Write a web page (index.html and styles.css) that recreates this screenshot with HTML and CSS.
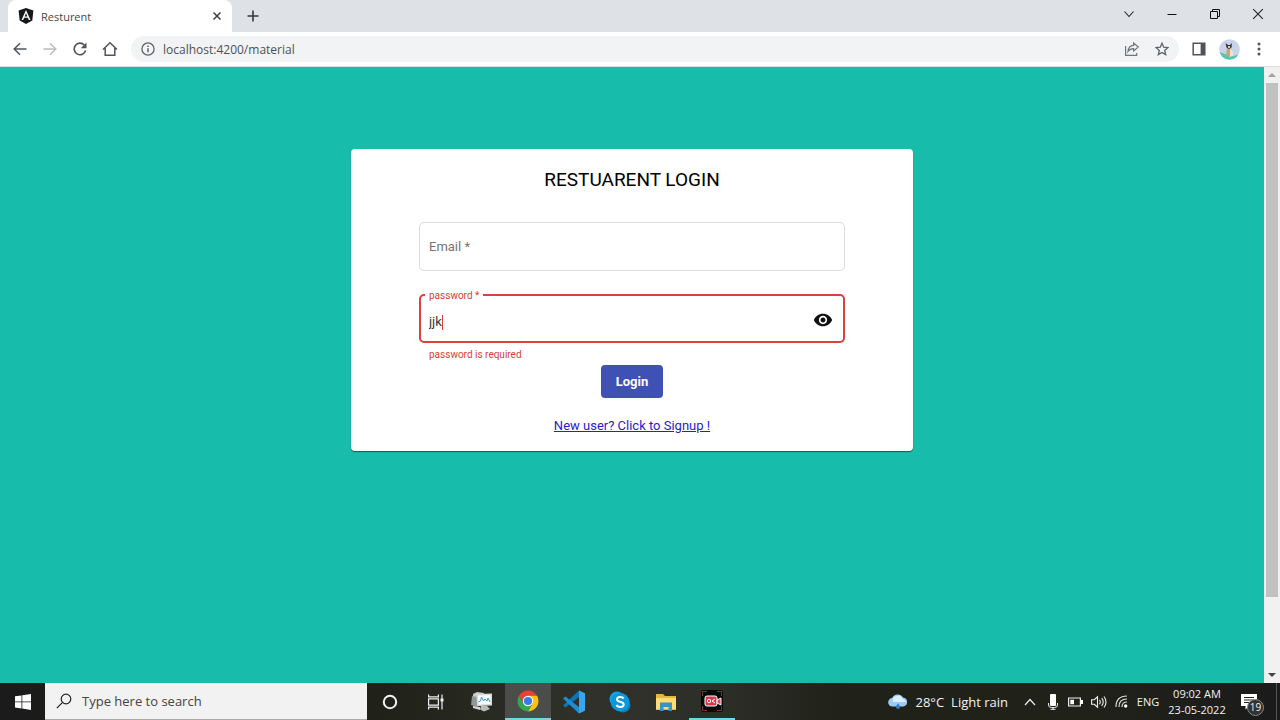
FILE: index.html
```html
<!DOCTYPE html>
<html lang="en">
<head>
<meta charset="utf-8">
<title>Resturent</title>
<link rel="stylesheet" href="styles.css">
</head>
<body>
<header class="browser">
  <div class="tabstrip">
    <div class="tab">
      <svg class="favicon" width="16" height="16" viewBox="0 0 16 16"><path d="M8 0l7.4 2.6-1.1 9.8L8 16l-6.3-3.6L.6 2.6z" fill="#15171a"/><path d="M8 2L3.5 12h1.7l.9-2.2h3.8l.9 2.2h1.7zm1.3 6.4H6.7L8 5.3z" fill="#fff"/></svg>
      <span class="tab-title">Resturent</span>
      <button class="tab-close" aria-label="Close tab"><svg width="10" height="10" viewBox="0 0 10 10"><path d="M1.5 1.5l7 7m0-7l-7 7" stroke="#3c4043" stroke-width="1.5"/></svg></button>
    </div>
    <button class="new-tab" aria-label="New tab"><svg width="12" height="12" viewBox="0 0 12 12"><path d="M6 .5v11M.5 6h11" stroke="#33363a" stroke-width="1.6"/></svg></button>
    <div class="window-controls">
      <button aria-label="Search tabs"><svg width="12" height="12" viewBox="0 0 12 12"><path d="M1.5 3.5L6 8.5l4.5-5" fill="none" stroke="#222" stroke-width="1.1"/></svg></button>
      <button aria-label="Minimize"><svg width="10" height="12" viewBox="0 0 10 12"><path d="M.5 6.5h9" stroke="#111"/></svg></button>
      <button aria-label="Restore"><svg width="10" height="10" viewBox="0 0 10 10" fill="none" stroke="#111"><path d="M.5 2.5h7v7h-7z"/><path d="M2.5 2.5v-2h7v7h-2"/></svg></button>
      <button aria-label="Close"><svg width="12" height="12" viewBox="0 0 12 12"><path d="M1.2 1.2l9.6 9.6m0-9.6l-9.6 9.6" stroke="#222" stroke-width="1.1"/></svg></button>
    </div>
  </div>
  <div class="toolbar">
    <nav class="nav-buttons">
      <button aria-label="Back"><svg width="14" height="14" viewBox="0 0 14 14" fill="none" stroke="#50545a" stroke-width="1.5"><path d="M13.5 7H1.2M7 1.2L1.2 7 7 12.8"/></svg></button>
      <button aria-label="Forward"><svg width="14" height="14" viewBox="0 0 14 14" fill="none" stroke="#babcbe" stroke-width="1.5"><path d="M.5 7h12.3M7 1.2L12.8 7 7 12.8"/></svg></button>
      <button aria-label="Reload"><svg width="14" height="14" viewBox="0 0 14 14"><path d="M12.6 8.5A5.8 5.8 0 1 1 11.3 3" fill="none" stroke="#50545a" stroke-width="1.6"/><path d="M13.5.5v5.7H7.8z" fill="#50545a"/></svg></button>
      <button aria-label="Home"><svg width="16" height="16" viewBox="0 0 16 16"><path d="M1 8.5L8 1.8l7 6.7M3.2 7v7.2h9.6V7" fill="none" stroke="#50545a" stroke-width="1.5"/></svg></button>
    </nav>
    <div class="omnibox">
      <svg width="14" height="14" viewBox="0 0 14 14"><circle cx="7" cy="7" r="6.1" fill="none" stroke="#5f6368" stroke-width="1.3"/><path d="M7 6.2v4M7 3.5v1.5" stroke="#5f6368" stroke-width="1.5"/></svg>
      <input class="address" aria-label="Address" value="localhost:4200/material">
      <button aria-label="Share"><svg width="16" height="16" viewBox="0 0 16 16" fill="none" stroke="#70757a" stroke-width="1.2"><path d="M1.600 5v9.300h11.100V12"/><path d="M4 10.500c.4-4 2.600-5.900 5.600-6.100V2l4.700 4-4.700 4V7.700C7 7.700 5.300 8.700 4 10.500z"/></svg></button>
      <button aria-label="Bookmark this page"><svg width="14" height="14" viewBox="0 0 14 14"><path d="M7 1.200l1.700 4 4.300.4-3.300 2.800 1 4.200L7 10.400l-3.700 2.200 1-4.200L1 5.600l4.300-.4z" fill="none" stroke="#5f6368" stroke-width="1.3"/></svg></button>
    </div>
    <div class="tools">
      <button aria-label="Side panel"><svg width="14" height="14" viewBox="0 0 14 14"><path d="M1.2 1.2h11.6v11.6H1.2z" fill="none" stroke="#50545a" stroke-width="1.5"/><path d="M8.600 1H13v12H8.600z" fill="#50545a"/></svg></button>
      <button aria-label="Profile"><svg width="21" height="21" viewBox="0 0 21 21"><defs><clipPath id="avatar"><circle cx="10.5" cy="10.5" r="10.3"/></clipPath></defs><g clip-path="url(#avatar)"><path d="M0 0h21v21H0z" fill="#c8d2e8"/><path d="M0 13l6 2 5 3 10-3v6H0z" fill="#51c9ae"/><path d="M8 9h4l2 7-5 2-2-2z" fill="#c9a577"/><path d="M11 9l3 4v4h-3z" fill="#eee2d2"/><path d="M6.500 4l2.500 2h2l2-2-.5 4.500L10 10 7.500 8.500z" fill="#33323b"/><path d="M9 7h2v2H9z" fill="#dbc7b6"/></g></svg></button>
      <button aria-label="Menu"><svg width="4" height="14" viewBox="0 0 4 14" fill="#50545a"><circle cx="2" cy="2" r="1.5"/><circle cx="2" cy="7" r="1.5"/><circle cx="2" cy="12" r="1.5"/></svg></button>
    </div>
  </div>
</header>

<div class="viewport">
  <main class="page">
    <form class="card">
      <h1>RESTUARENT LOGIN</h1>
      <div class="field">
        <input class="control" id="email" type="email" placeholder="Email *" aria-label="Email">
      </div>
      <div class="field invalid">
        <label for="password">password *</label>
        <input class="control" id="password" type="text" value="jjk" aria-describedby="password-error">
        <span class="caret"></span>
        <button class="reveal" type="button" aria-label="Hide password"><svg width="20" height="20" viewBox="0 0 24 24"><path d="M12 4.5C7 4.5 2.730 7.610 1 12c1.730 4.390 6 7.500 11 7.500s9.270-3.110 11-7.500c-1.730-4.390-6-7.500-11-7.500zM12 17c-2.760 0-5-2.240-5-5s2.240-5 5-5 5 2.240 5 5-2.240 5-5 5zm0-8c-1.660 0-3 1.340-3 3s1.340 3 3 3 3-1.340 3-3-1.340-3-3-3z" fill="#111"/></svg></button>
      </div>
      <p class="error" id="password-error">password is required</p>
      <button class="login" type="button">Login</button>
      <a class="signup" href="#">New user? Click to Signup !</a>
    </form>
  </main>
  <div class="scrollbar">
    <span class="arrow up"></span>
    <div class="track"><div class="thumb"></div></div>
    <span class="arrow down"></span>
  </div>
</div>

<footer class="taskbar">
  <button class="start" aria-label="Start"><svg width="16" height="16" viewBox="0 0 16 16" fill="#fff"><path d="M0 2.300l6.500-.9v6.100H0zM7.300 1.300L16 0v7.500H7.300zM0 8.300h6.500v6.200L0 13.600zM7.300 8.300H16V16l-8.700-1.400z"/></svg></button>
  <div class="search">
    <svg width="16" height="16" viewBox="0 0 16 16" fill="none" stroke="#222" stroke-width="1.2"><circle cx="10" cy="6" r="4.8"/><path d="M6.600 9.400L.8 15.200"/></svg>
    <input type="text" aria-label="Search" placeholder="Type here to search">
  </div>
  <div class="apps">
    <button aria-label="Cortana"><svg width="18" height="18" viewBox="0 0 18 18"><circle cx="9" cy="9" r="6.200" fill="none" stroke="#f3f3f3" stroke-width="2"/></svg></button>
    <button aria-label="Task view"><svg width="18" height="18" viewBox="0 0 18 18" fill="none" stroke="#eee" stroke-width="1.2"><path d="M1.600 1.500v2.300h9.800V1.500M1.600 5.800h9.800v6.400H1.600zM1.600 16.500v-2.300h9.800v2.300M15 1.500v15"/><path d="M13.500 5.500h3v3h-3z" fill="#eee" stroke="none"/></svg></button>
    <button aria-label="Performance Monitor"><svg width="24" height="22" viewBox="0 0 24 22"><path d="M3 3l4-2 7 1-2 13-9-1z" fill="#c7cac9"/><path d="M2 5l5 1v10l-6-2z" fill="#909694"/><path d="M6.500 3l15.500-.5v12L7 15z" fill="#d7dad8"/><path d="M8 4.500l12.500-.4v8.800L8.500 13.500z" fill="#f8fcff"/><path d="M8.500 11l2-1 1-4 2 4 1.500-2 2 2 1-3 2 4" fill="none" stroke="#4296c8"/><path d="M11 15h6l3 3-6 2.500-4-2z" fill="#b8bcba"/><path d="M3 15l7 1v3l-7-2z" fill="#d7d7d5"/></svg></button>
    <button class="current" aria-label="Google Chrome"><svg width="22" height="22" viewBox="0 0 22 22"><path d="M11 11L1.910 5.750A10.500 10.500 0 0 1 20.090 5.750L11 5.750z" fill="#e94235"/><path d="M11 11V5.750h9.090A10.500 10.500 0 0 1 11 21.500l4.550-7.900z" fill="#fbc116"/><path d="M1.910 5.750L6.450 13.600 11 5.750z" fill="#e94235"/><path d="M1.910 5.750L6.450 13.600 11 16.200l4.550-2.600L11 21.500A10.500 10.500 0 0 1 1.910 5.750z" fill="#32a853"/><circle cx="11" cy="11" r="5.200" fill="#fff"/><circle cx="11" cy="11" r="4.100" fill="#367be8"/></svg></button>
    <button aria-label="Visual Studio Code"><svg width="24" height="24" viewBox="0 0 24 24"><path d="M17 .5L1 15.500l2.500 2L17 7z" fill="#0876bb"/><path d="M1 8.500l2.500-2L17 17v6.500z" fill="#218bd2"/><path d="M17 .5l6 2.800v17.400l-6 2.800z" fill="#37a6ef"/></svg></button>
    <button aria-label="Skype"><svg width="22" height="22" viewBox="0 0 22 22"><circle cx="8" cy="8" r="7.500" fill="#13a8e5"/><circle cx="14" cy="14" r="7.500" fill="#087fc8"/><circle cx="11" cy="11" r="9.300" fill="#0c96dc"/><path d="M14.600 7.500C13.500 5.500 8 5.300 8 8.400c0 3 6.700 1.700 6.700 5 0 3.300-6.200 3.200-7.200.5" fill="none" stroke="#fff" stroke-width="2"/></svg></button>
    <button aria-label="File Explorer"><svg width="22" height="20" viewBox="0 0 22 20"><path d="M1 2h7l2 2h11v14H1z" fill="#e7b83e"/><path d="M1 6h20v11H1z" fill="#ffdb73"/><path d="M5 10.500h12V19h-3.500v-4h-5v4H5z" fill="#3993cb"/></svg></button>
    <button class="open" aria-label="Screen Recorder"><svg width="22" height="22" viewBox="0 0 22 22"><rect width="22" height="22" rx="3" fill="#080808"/><path d="M1.500 6V1.500H6M16 1.500h4.500V6M1.500 16v4.500H6M16 20.500h4.500V16" fill="none" stroke="#863139"/><rect x="4" y="6" width="12" height="10" rx="2" fill="#d9384b" stroke="#fff"/><path d="M16 10l4-2v7l-4-2z" fill="#e24a5b" stroke="#fff"/><circle cx="8" cy="11" r="1.700" fill="none" stroke="#fff"/><path d="M14 9l-3 2 3 2" fill="none" stroke="#fff"/></svg></button>
  </div>
  <div class="tray">
    <button class="weather"><svg width="20" height="18" viewBox="0 0 20 18"><path d="M4.500 13.500a4.200 4.200 0 0 1-.3-8.400A6 6 0 0 1 15 4.600a4.500 4.500 0 0 1 .5 8.900z" fill="#9ccaf4"/><path d="M5 9a4 4 0 0 1 3-6 5 5 0 0 1 7 3 4 4 0 0 1 3 3z" fill="#dceeff"/><path d="M10 10.500c-1.200 1.700-2 2.500-2 3.500a2 2 0 0 0 4 0c0-1-.8-1.800-2-3.500z" fill="#2f7ecb"/></svg><span>28°C</span><span>Light rain</span></button>
    <div class="status">
      <button aria-label="Show hidden icons"><svg width="12" height="8" viewBox="0 0 12 8"><path d="M1 7l5-5.500L11 7" fill="none" stroke="#eee" stroke-width="1.2"/></svg></button>
      <button aria-label="Microphone"><svg width="12" height="16" viewBox="0 0 12 16"><rect x="3" y="0" width="6" height="12" rx="1" fill="#fff"/><path d="M1.500 9v2q0 2.500 3 2.500h3q3 0 3-2.500V9M6 13v2.500M3.500 15.300h5" fill="none" stroke="#eee"/></svg></button>
      <button aria-label="Battery"><svg width="15" height="10" viewBox="0 0 15 10"><path d="M.6 1h11.800v8H.6z" fill="none" stroke="#eee" stroke-width="1.2"/><path d="M2.300 2.800H6v4.400H2.300zM12.500 3H15v4h-2.500z" fill="#fff"/></svg></button>
      <button aria-label="Volume"><svg width="16" height="14" viewBox="0 0 16 14" fill="none" stroke="#eee" stroke-width="1.1"><path d="M.6 4.700h2.700L6.500 1.800v10.400L3.300 9.300H.6zM8.500 4.800q1.600 2.200 0 4.400M10.700 3.200q3 3.800 0 7.600M13 1.500q4 5.500 0 11"/></svg></button>
      <button aria-label="Network"><svg width="13" height="13" viewBox="0 0 13 13" fill="none" stroke="#ddd" stroke-width="1.2"><path d="M1 12Q1 1 12 1M4 12Q4 4 12 4M7 12Q7 7 12 7"/><circle cx="10.700" cy="11" r="1.700" fill="#fff" stroke="none"/></svg></button>
    </div>
    <button class="lang">ENG</button>
    <button class="clock"><span>09:02 AM</span><span>23-05-2022</span></button>
    <button class="notifications" aria-label="19 notifications"><svg width="16" height="16" viewBox="0 0 16 16"><path d="M0 0h16v12H8l-3.500 3.500V12H0z" fill="#fff"/><path d="M3 3.500h10M3 6h10M3 8.500h7" stroke="#222"/></svg><span class="badge">19</span></button>
    <button class="show-desktop" aria-label="Show desktop"></button>
  </div>
</footer>
</body>
</html>
```
FILE: styles.css
```css
* { box-sizing: border-box; }

body {
  margin: 0;
  min-height: 100vh;
  display: flex;
  flex-direction: column;
  font-family: "Open Sans", "Noto Sans", sans-serif;
}

button {
  padding: 0;
  border: 0;
  background: none;
  font: inherit;
  color: inherit;
  display: flex;
  align-items: center;
  justify-content: center;
}

input {
  min-width: 0;
  border: 0;
  padding: 0;
  background: none;
  font: inherit;
  outline: 0;
}

svg { display: block; flex: none; }

/* Browser window */
.tabstrip {
  display: flex;
  align-items: stretch;
  height: 32px;
  padding-left: 8px;
  background: #dee1e6;
}

.tab {
  display: flex;
  align-items: center;
  width: 224px;
  padding: 0 10px;
  gap: 7px;
  border-radius: 8px 8px 0 0;
  background: #fff;
  color: #45484c;
  font-size: 11px;
}

.tab-title { flex: 1; }

.new-tab { width: 42px; }

.window-controls {
  display: flex;
  margin-left: auto;
  padding: 0 1px 5px 0;
}

.window-controls button { width: 43px; }

.toolbar {
  display: flex;
  align-items: center;
  height: 35px;
  padding-left: 5px;
  background: #fff;
  border-bottom: 1px solid #dcdfe2;
}

.nav-buttons { display: flex; margin-right: 6px; }
.nav-buttons button { width: 30px; height: 26px; }

.omnibox {
  flex: 1;
  display: flex;
  align-items: center;
  height: 26px;
  padding: 0 2px 0 10px;
  border-radius: 13px;
  background: #f1f3f4;
}

.omnibox button { width: 30px; height: 26px; }

.address {
  flex: 1;
  margin-left: 8px;
  color: #4d5156;
  font-size: 12px;
}

.tools { display: flex; padding: 0 6px 0 5px; }
.tools button { width: 30px; height: 26px; }

/* Page */
.viewport { flex: 1; display: flex; }

.page {
  flex: 1;
  padding: 82px 24px;
  background: #18bcaa;
  font-family: Roboto, sans-serif;
}

.card {
  display: flex;
  flex-direction: column;
  max-width: 562px;
  margin: 0 auto;
  padding: 17px 68px 15px;
  border-radius: 4px;
  background: #fff;
  box-shadow: 0 1px 1px rgba(0, 0, 0, .5);
}

h1 {
  margin: 0 0 28px;
  font-size: 19px;
  line-height: 28px;
  font-weight: 400;
  text-align: center;
  color: #000;
}

.field {
  position: relative;
  display: flex;
  align-items: center;
  height: 49px;
  margin-bottom: 23px;
  padding: 0 9px;
  border: 1px solid #dcdcdc;
  border-radius: 5px;
  font-size: 13px;
}

.control { flex: 1; color: #333; }
.control::placeholder { color: #757575; opacity: 1; }

.invalid {
  margin-bottom: 4px;
  padding: 6px 10px 0 8px;
  border: 2px solid #dc4038;
}

.invalid label {
  position: absolute;
  top: -7px;
  left: 4px;
  padding: 0 4px;
  background: #fff;
  color: #dc4038;
  font-size: 10px;
  line-height: 14px;
}

.caret {
  position: absolute;
  left: 21px;
  top: 19px;
  width: 1px;
  height: 15px;
  background: #dc4038;
}

.reveal { margin-bottom: 4px; }

.error {
  margin: 0 10px 2px;
  font-size: 10px;
  line-height: 16px;
  color: #dc4038;
}

.login {
  align-self: center;
  padding: 0 15px;
  height: 33px;
  border-radius: 4px;
  background: #3f51b5;
  color: #fff;
  font-size: 13px;
  font-weight: 700;
}

.signup {
  align-self: center;
  margin-top: 18px;
  font-size: 13px;
  line-height: 20px;
  color: #2a20c8;
}

.scrollbar {
  display: flex;
  flex-direction: column;
  width: 16px;
  background: #f1f1f1;
}

.track { flex: 1; padding: 0 2px; }
.thumb { height: 88%; background: #c1c1c1; }

.arrow {
  height: 16px;
  display: flex;
  align-items: center;
  justify-content: center;
}

.arrow::before {
  content: "";
  border: 4px solid transparent;
}

.up::before { border-top: 0; border-bottom-color: #a0a0a0; }
.down::before { border-bottom: 0; border-top-color: #444; }

/* Taskbar */
.taskbar {
  display: flex;
  height: 37px;
  background: linear-gradient(90deg, #1b1b1b, #202219 30%, #30322a 46%, #2c2e28 56%, #202219 66%, #202219 85%, #1b1b1b);
  color: #f2f2f2;
}

.start { width: 45px; }

.search {
  display: flex;
  align-items: center;
  width: 322px;
  padding: 0 11px;
  gap: 10px;
  background: #f2f2f2;
  border-bottom: 1px solid #aaa;
}

.search input { flex: 1; font-size: 13px; }
.search input::placeholder { color: #444; opacity: 1; }

.apps { display: flex; }
.apps button { width: 46px; }
.apps .current { background: #4a4d49; border-bottom: 2px solid #76d4e8; }
.apps .open { border-bottom: 2px solid #76d4e8; }

.tray { display: flex; margin-left: auto; }

.weather { gap: 7px; font-size: 13px; margin-right: 10px; }

.status { display: flex; }
.status button { width: 23px; }

.lang { width: 30px; font-size: 11px; }

.clock {
  flex-direction: column;
  width: 68px;
  font-size: 11px;
  line-height: 16px;
}

.notifications {
  position: relative;
  width: 36px;
  margin-right: 9px;
}

.show-desktop {
  width: 4px;
  border-left: 1px solid #555;
}

.badge {
  position: absolute;
  right: 3px;
  bottom: 4px;
  width: 17px;
  height: 17px;
  border: 1px solid #888;
  border-radius: 50%;
  background: #333;
  font-size: 10px;
  line-height: 15px;
  text-align: center;
}
```
